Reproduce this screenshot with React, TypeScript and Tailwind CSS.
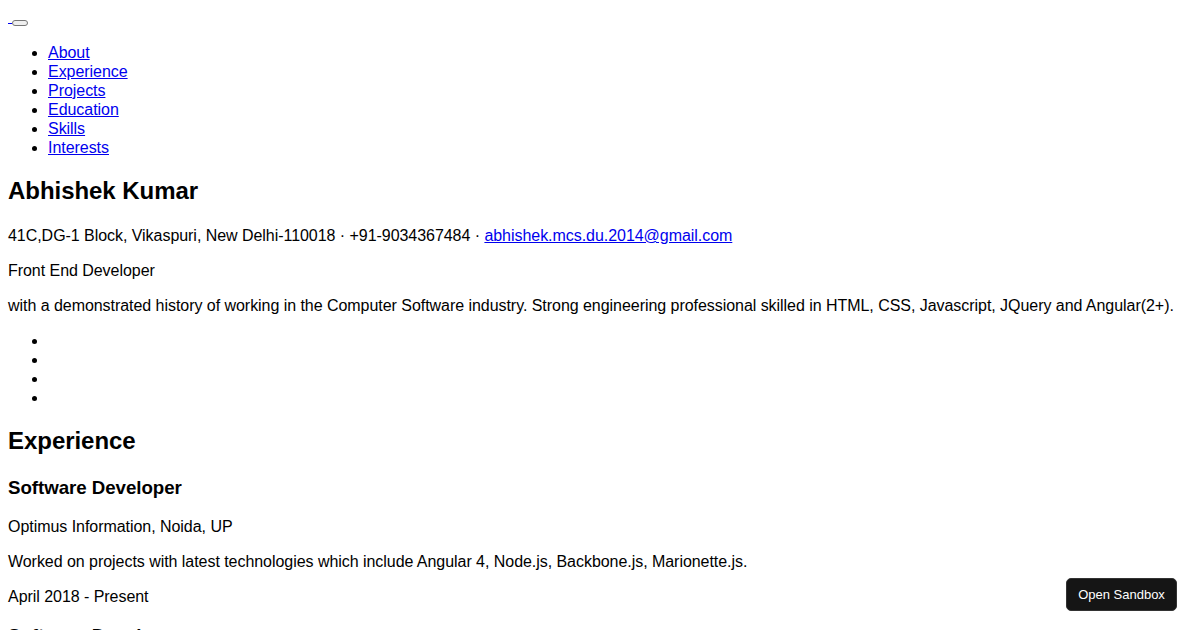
export default function App() {
  const nav = ['About', 'Experience', 'Projects', 'Education', 'Skills', 'Interests']

  return (
    <div className="min-h-screen bg-white p-2 font-['Liberation_Sans',Arial,sans-serif] text-[16px] leading-[19px] tracking-[-0.045px] text-black">
      {/* nav */}
      <div className="flex items-start h-[19px]">
        <a href="#" className="inline-block w-[4px] h-[1px] bg-[#0000ee] mt-[15px]" />
        <button className="mt-[12px] w-4 h-[6px] bg-[#efefef] border border-[#767676] rounded-[3px]" />
      </div>
      <ul className="mt-4 pl-10 list-disc">
        {nav.map((n) => (
          <li key={n}>
            <a href="#" className="text-[#0000ee] underline">
              {n}
            </a>
          </li>
        ))}
      </ul>

      {/* about */}
      <section>
        <h1 className="mt-[20px] text-[24px] leading-[28px] font-bold">Abhishek Kumar</h1>
        <p className="mt-[21px]">
          41C,DG-1 Block, Vikaspuri, New Delhi-110018 · +91-9034367484 ·{' '}
          <a href="#" className="text-[#0000ee] underline">
            abhishek.mcs.du.2014@gmail.com
          </a>
        </p>
        <p className="mt-4">Front End Developer</p>
        <p className="mt-4">
          with a demonstrated history of working in the Computer Software industry. Strong engineering professional
          skilled in HTML, CSS, Javascript, JQuery and Angular(2+).
        </p>
        <ul className="mt-4 pl-10 list-disc">
          <li>&nbsp;</li>
          <li>&nbsp;</li>
          <li>&nbsp;</li>
          <li>&nbsp;</li>
        </ul>
      </section>

      {/* experience */}
      <section>
        <h2 className="mt-[20px] text-[24px] leading-[28px] font-bold">Experience</h2>
        <h3 className="mt-[22px] text-[18.72px] leading-[22px] font-bold">Software Developer</h3>
        <p className="mt-[18px]">Optimus Information, Noida, UP</p>
        <p className="mt-4">
          Worked on projects with latest technologies which include Angular 4, Node.js, Backbone.js, Marionette.js.
        </p>
        <p className="mt-4">April 2018 - Present</p>
        <h3 className="mt-[19px] text-[18.72px] leading-[22px] font-bold">Software Developer</h3>
      </section>

      <button className="fixed right-[23px] bottom-[19px] h-[33px] w-[111px] rounded-[5px] bg-[#151515] border border-[#333] text-white text-[13px] tracking-normal font-['Liberation_Sans',Arial,sans-serif]">
        Open Sandbox
      </button>
    </div>
  )
}
